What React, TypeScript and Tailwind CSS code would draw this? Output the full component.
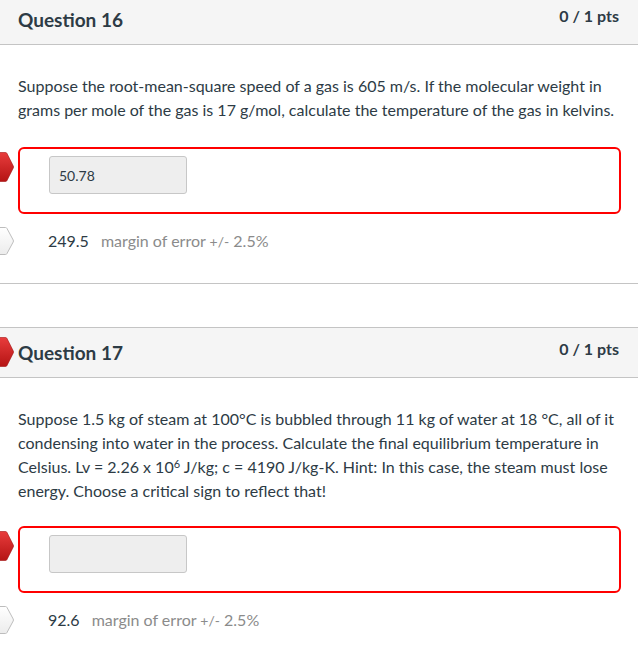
import React from "react"

const font = { fontFamily: "Lato, 'Helvetica Neue', Arial, sans-serif" }

const RedArrow = ({ className }: { className: string }) => (
    <svg className={className} width="14" height="30" viewBox="0 0 14 30">
        <defs>
            <linearGradient id="redg" x1="0" y1="0" x2="0" y2="1">
                <stop offset="0" stopColor="#e83c3c" />
                <stop offset="1" stopColor="#b51414" />
            </linearGradient>
        </defs>
        <path d="M-2 0.5 H5.5 Q6.5 0.5 7 1.5 L13.3 14 Q13.8 15 13.3 16 L7 28.5 Q6.5 29.5 5.5 29.5 H-2 Z" fill="url(#redg)" stroke="#a31212" strokeWidth="0.6" />
    </svg>
)

const WhiteArrow = ({ className }: { className: string }) => (
    <svg className={className} width="14" height="28" viewBox="0 0 14 28">
        <defs>
            <linearGradient id="wg" x1="0" y1="0" x2="0" y2="1">
                <stop offset="0" stopColor="#ffffff" />
                <stop offset="1" stopColor="#ececec" />
            </linearGradient>
        </defs>
        <path d="M-2 0.5 H5.5 Q6.5 0.5 7 1.5 L13.2 13 Q13.7 14 13.2 15 L7 26.5 Q6.5 27.5 5.5 27.5 H-2 Z" fill="url(#wg)" stroke="#bdbdbd" strokeWidth="1" />
    </svg>
)

const Header = ({ title, marked, first }: { title: string; marked?: boolean; first?: boolean }) => (
    <div className={`relative h-[51px] bg-[#f5f5f5] border-y border-[#c4c4c4] px-[18px] flex justify-between ${first ? "-mt-[6px]" : ""}`}>
        {marked && <RedArrow className="absolute left-0 top-[9px]" />}
        <h2 className="pt-[13px] text-[19px] leading-6 font-bold text-[#2d3b45]">{title}</h2>
        <span className="pt-[11px] pr-[1px] text-[16px] leading-5 font-bold text-[#2d3b45]">0 / 1 pts</span>
    </div>
)

const Answer = ({ value, correct, gap }: { value: string; correct: string; gap: string }) => (
    <>
        <div className={`relative ${gap}`}>
            <RedArrow className="absolute left-0 top-[5px]" />
            <div className="ml-[18px] mr-[17px] h-[67px] rounded-[6px] border-2 border-[#ff0000] pl-[29px] pt-[7px]">
                <div className="w-[138px] h-[38px] bg-[#eeeeee] border border-[#c7c7c7] rounded-[3px] pl-[9px] flex items-center text-[14px] text-[#2d3b45]">
                    {value}
                </div>
            </div>
        </div>
        <div className="relative mt-[17px] h-5 flex items-center pl-[48px] text-[16px]">
            <WhiteArrow className="absolute left-0 top-[-4px]" />
            <span className="text-[#2d3b45]">{correct}</span>
            <span className="ml-3 text-[#8b8b8b]">
                margin of error <span className="text-[14px]">+/-</span> 2.5%
            </span>
        </div>
    </>
)

export default function App() {
    return (
        <div className="w-[638px] h-[661px] overflow-hidden bg-white" style={font}>
            {/* Question 16 */}
            <div className="border-b border-[#c4c4c4] pb-[32px]">
                <Header title="Question 16" first />
                <p className="px-[18px] pt-[29px] text-[16px] leading-6 text-[#2d3b45]">
                    Suppose the root-mean-square speed of a gas is 605 m/s. If the molecular weight in grams per mole of the gas is 17 g/mol, calculate the temperature of the gas in kelvins.
                </p>
                <Answer value="50.78" correct="249.5" gap="mt-[25px]" />
            </div>

            {/* Question 17 */}
            <div className="mt-[43px]">
                <Header title="Question 17" marked />
                <p className="px-[18px] pt-[29px] text-[16px] leading-6 text-[#2d3b45]">
                    Suppose 1.5 kg of steam at 100°C is bubbled through 11 kg of water at 18 °C, all of it condensing into water in the process. Calculate the final equilibrium temperature in Celsius. Lv = 2.26 x 10<sup className="text-[11px] leading-none">6</sup> J/kg; c = 4190 J/kg-K. Hint: In this case, the steam must lose energy. Choose a critical sign to reflect that!
                </p>
                <Answer value="" correct="92.6" gap="mt-[23px]" />
            </div>
        </div>
    )
}
